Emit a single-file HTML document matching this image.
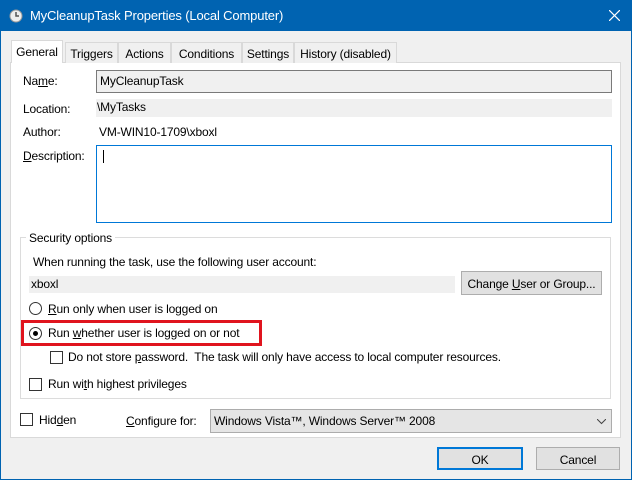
<!DOCTYPE html><html><head><style>
*{margin:0;padding:0;box-sizing:border-box}
body{width:632px;height:480px;overflow:hidden;background:#f0f0f0;font-family:"Liberation Sans",sans-serif;font-size:12px;letter-spacing:-0.15px;color:#000;position:relative}
.a{position:absolute;white-space:nowrap}
.tb{left:0;top:0;width:632px;height:31px;background:#0063b1;color:#fff;font-size:13px}
.tab{top:42px;height:21px;border:1px solid #d9d9d9;border-bottom:none;background:#f0f0f0;padding:4px 0 0;text-align:center}
.fld{background:#f0f0f0}
.btn{background:#e1e1e1;border:1px solid #adadad;text-align:center}
.cb{width:13px;height:13px;border:1px solid #333;background:#fff}
.rb{width:13px;height:13px;border:1px solid #333;border-radius:50%;background:#fff}
u{text-decoration:underline}
</style></head><body>
<div class="a" style="left:0;top:0;width:632px;height:480px;border:1px solid #0063b1;border-top:none"></div>
<div class="a tb"><svg class="a" style="left:9px;top:9px" width="14" height="14"><circle cx="7" cy="7" r="6" fill="#eee" stroke="#999"/><path d="M7 3v4h3" stroke="#555" stroke-width="1.5" fill="none"/></svg><span class="a" style="left:30px;top:8px">MyCleanupTask Properties (Local Computer)</span><svg class="a" style="left:609px;top:10px" width="11" height="11"><path d="M0 0L11 11M11 0L0 11" stroke="#fff" stroke-width="1.2"/></svg></div>
<div class="a" style="left:10px;top:62px;width:611px;height:376px;background:#fff;border:1px solid #d9d9d9"></div>
<div class="a tab" style="left:11px;top:40px;height:23px;background:#fff;width:52px">General</div>
<div class="a tab" style="left:65px;width:53px">Triggers</div>
<div class="a tab" style="left:118px;width:53px">Actions</div>
<div class="a tab" style="left:171px;width:71px">Conditions</div>
<div class="a tab" style="left:242px;width:52px">Settings</div>
<div class="a tab" style="left:294px;width:103px">History (disabled)</div>
<span class="a" style="left:23px;top:74px">Na<u>m</u>e:</span>
<div class="a fld" style="left:96px;top:70px;width:516px;height:23px;border:1px solid #7a7a7a;padding:3px 3px">MyCleanupTask</div>
<span class="a" style="left:23px;top:102px">Location:</span>
<div class="a fld" style="left:96px;top:99px;width:516px;height:18px;padding:1px 1px">\MyTasks</div>
<span class="a" style="left:23px;top:125px">Author:</span>
<span class="a" style="left:99px;top:125px">VM-WIN10-1709\xboxl</span>
<span class="a" style="left:23px;top:149px"><u>D</u>escription:</span>
<div class="a" style="left:96px;top:145px;width:516px;height:78px;border:1px solid #0078d7;background:#fff"><div class="a" style="left:6px;top:4px;width:1px;height:13px;background:#000"></div></div>
<div class="a" style="left:20px;top:237px;width:591px;height:162px;border:1px solid #dcdcdc"></div>
<span class="a" style="left:26px;top:231px;background:#fff;padding:0 3px">Security options</span>
<span class="a" style="left:33px;top:255px">When running the task, use the following user account:</span>
<div class="a fld" style="left:29px;top:276px;width:426px;height:17px;padding:1px 2px">xboxl</div>
<div class="a btn" style="left:461px;top:271px;width:141px;height:24px;padding-top:5px">Change <u>U</u>ser or Group...</div>
<div class="a rb" style="left:29px;top:302px"></div><span class="a" style="left:48px;top:302px"><u>R</u>un only when user is logged on</span>
<div class="a" style="left:21px;top:320px;width:241px;height:26px;border:3px solid #e0141e"></div>
<div class="a rb" style="left:29px;top:327px"><div class="a" style="left:3px;top:3px;width:5px;height:5px;border-radius:50%;background:#000"></div></div><span class="a" style="left:48px;top:326px">Run <u>w</u>hether user is logged on or not</span>
<div class="a cb" style="left:50px;top:351px"></div><span class="a" style="left:68px;top:350px">Do not store <u>p</u>assword.&nbsp; The task will only have access to local computer resources.</span>
<div class="a cb" style="left:29px;top:378px"></div><span class="a" style="left:48px;top:377px">Run wi<u>t</u>h highest privileges</span>
<div class="a cb" style="left:20px;top:413px"></div><span class="a" style="left:39px;top:413px">Hid<u>d</u>en</span>
<span class="a" style="left:126px;top:414px"><u>C</u>onfigure for:</span>
<div class="a" style="left:210px;top:409px;width:402px;height:24px;background:#e5e5e5;border:1px solid #acacac;padding:4px 3px">Windows Vista™, Windows Server™ 2008<svg class="a" style="left:386px;top:9px" width="9" height="6"><path d="M0 0L4.5 4.5L9 0" stroke="#444" fill="none"/></svg></div>
<div class="a btn" style="left:437px;top:447px;width:86px;height:23px;border:2px solid #0078d7;padding-top:4px">OK</div>
<div class="a btn" style="left:536px;top:447px;width:84px;height:23px;padding-top:5px">Cancel</div>
</body></html>
